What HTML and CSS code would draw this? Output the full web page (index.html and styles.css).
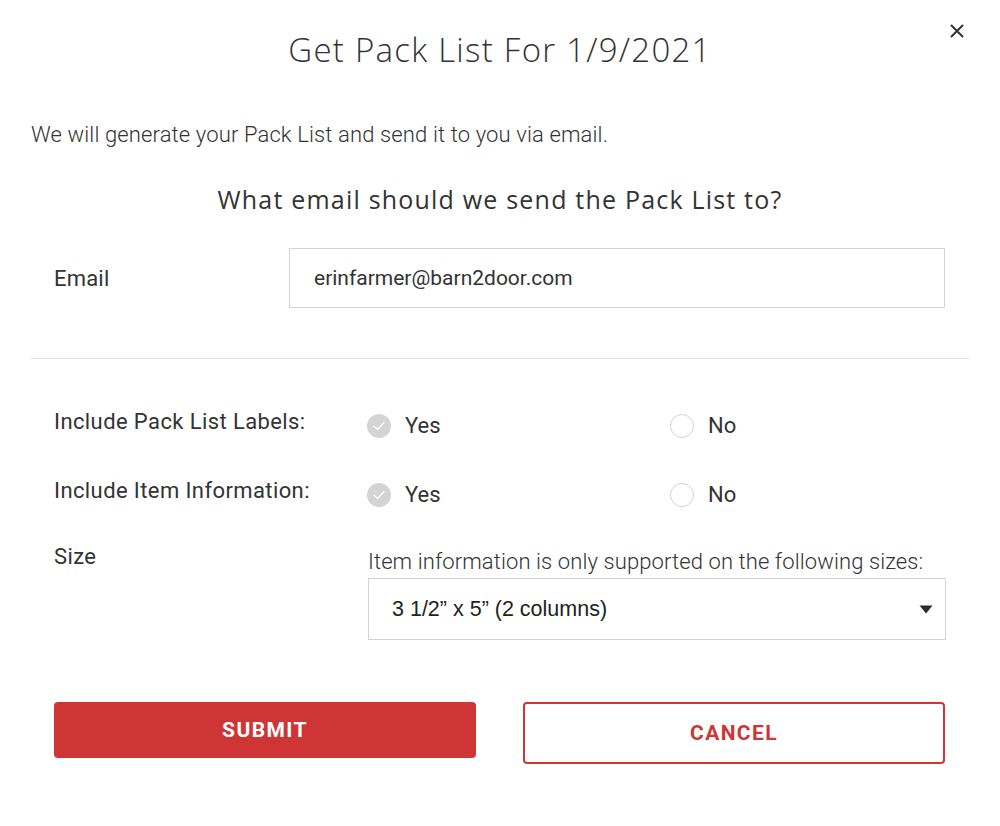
FILE: index.html
```html
<!DOCTYPE html>
<html lang="en">
<head>
<meta charset="utf-8">
<title>Get Pack List</title>
<link rel="stylesheet" href="styles.css">
</head>
<body>
<div class="modal">
  <button class="close" aria-label="Close">
    <svg width="14" height="14" viewBox="0 0 14 14"><path d="M1.5 1.5 L12.5 12.5 M12.5 1.5 L1.5 12.5" stroke="#333" stroke-width="2" stroke-linecap="round"/></svg>
  </button>
  <h1 class="title">Get Pack List For 1/9/2021</h1>
  <p class="intro">We will generate your Pack List and send it to you via email.</p>
  <h2 class="question">What email should we send the Pack List to?</h2>

  <div class="email-row">
    <label class="label email-label">Email</label>
    <div class="input">erinfarmer@barn2door.com</div>
  </div>

  <hr class="divider">

  <div class="opt-row">
    <div class="label opt-label">Include Pack List Labels:</div>
    <div class="option yes">
      <span class="radio checked"><svg width="24" height="24" viewBox="0 0 24 24"><circle cx="12" cy="12" r="12" fill="#d4d4d4"/><path d="M7 12.3 L10.5 15.6 L17 8.8" fill="none" stroke="#fff" stroke-width="1.4" stroke-linecap="round" stroke-linejoin="round"/></svg></span>
      <span class="opt-text">Yes</span>
    </div>
    <div class="option">
      <span class="radio"></span>
      <span class="opt-text">No</span>
    </div>
  </div>

  <div class="opt-row">
    <div class="label opt-label">Include Item Information:</div>
    <div class="option yes">
      <span class="radio checked"><svg width="24" height="24" viewBox="0 0 24 24"><circle cx="12" cy="12" r="12" fill="#d4d4d4"/><path d="M7 12.3 L10.5 15.6 L17 8.8" fill="none" stroke="#fff" stroke-width="1.4" stroke-linecap="round" stroke-linejoin="round"/></svg></span>
      <span class="opt-text">Yes</span>
    </div>
    <div class="option">
      <span class="radio"></span>
      <span class="opt-text">No</span>
    </div>
  </div>

  <div class="size-row">
    <div class="label size-label">Size</div>
    <div class="size-col">
      <div class="hint">Item information is only supported on the following sizes:</div>
      <div class="select">
        <span>3 1/2” x 5” (2 columns)</span>
        <svg class="caret" width="14" height="9" viewBox="0 0 14 9"><path d="M0.5 0.5 H13.5 L7 8.5 Z" fill="#2b2b2b"/></svg>
      </div>
    </div>
  </div>

  <div class="buttons">
    <button class="btn submit">SUBMIT</button>
    <button class="btn cancel">CANCEL</button>
  </div>
</div>
</body>
</html>
```

FILE: styles.css
```css
* { box-sizing: border-box; }
html, body { margin: 0; padding: 0; background: #fff; }
body {
  width: 1000px;
  height: 826px;
  font-family: Roboto, "Liberation Sans", sans-serif;
  color: #333;
}
.modal {
  position: relative;
  width: 1000px;
  height: 826px;
  padding: 0 31px;
}
.close {
  position: absolute;
  top: 24px;
  right: 36px;
  width: 14px;
  height: 14px;
  padding: 0;
  border: 0;
  background: none;
  display: flex;
}
.title {
  margin: 0;
  height: 100px;
  line-height: 100px;
  text-align: center;
  font-family: "Open Sans", sans-serif;
  font-weight: 300;
  font-size: 33px;
  color: #333;
  letter-spacing: 1.25px;
}
.intro {
  margin: 18px 0 0;
  height: 34px;
  line-height: 34px;
  font-size: 22px;
  font-weight: 300;
  color: #333;
  letter-spacing: 0.13px;
}
.question {
  margin: 30px 0 0;
  height: 34px;
  line-height: 34px;
  text-align: center;
  font-family: "Open Sans", sans-serif;
  font-weight: 400;
  font-size: 25px;
  color: #333;
  letter-spacing: 1.2px;
}
.email-row {
  margin-top: 32px;
  padding-left: 23px;
  display: flex;
  align-items: center;
  height: 60px;
}
.label {
  font-size: 22px;
  font-weight: 400;
  color: #333;
  line-height: 26px;
  letter-spacing: 0.4px;
}
.email-label { width: 235px; letter-spacing: 0.2px; padding-top: 2px; }
.input {
  width: 656px;
  height: 60px;
  border: 1px solid #d3d3d3;
  padding: 0 24px;
  display: flex;
  align-items: center;
  font-size: 21px;
  color: #333;
}
.divider {
  margin: 50px 0 0;
  border: 0;
  border-top: 1px solid #dcdcdc;
  height: 0;
}
.opt-row {
  display: flex;
  align-items: flex-start;
  padding-left: 23px;
  height: 69px;
}
.divider + .opt-row { margin-top: 48px; }
.opt-label { width: 313px; padding-top: 2px; }
.option {
  display: flex;
  align-items: center;
  gap: 14px;
  margin-top: 6px;
  height: 26px;
}
.option.yes { width: 303px; }
.radio {
  width: 24px;
  height: 24px;
  border-radius: 50%;
  border: 1.5px solid #d3d3d3;
  display: block;
  flex: none;
}
.radio.checked { border: 0; }
.radio svg { display: block; }
.opt-text { font-size: 22px; line-height: 26px; color: #333; }
.size-row {
  display: flex;
  align-items: flex-start;
  padding-left: 23px;
  margin-top: -3px;
}
.size-label { width: 314px; padding-top: 2px; }
.size-col { width: 578px; }
.hint {
  margin-top: 7px;
  font-size: 22px;
  font-weight: 300;
  line-height: 26px;
  color: #333;
  letter-spacing: 0.1px;
}
.select {
  margin-top: 3px;
  height: 62px;
  border: 1px solid #d3d3d3;
  display: flex;
  align-items: center;
  justify-content: space-between;
  padding: 0 12px 0 23px;
  font-family: "Liberation Sans", Arial, sans-serif;
  font-size: 21.5px;
  color: #222;
}
.buttons {
  margin-top: 62px;
  padding-left: 23px;
  display: flex;
  align-items: flex-start;
  gap: 47px;
}
.btn {
  width: 422px;
  font-family: Roboto, sans-serif;
  font-weight: 700;
  font-size: 21px;
  letter-spacing: 1.4px;
  border-radius: 4px;
  cursor: pointer;
}
.submit {
  height: 56px;
  background: #d03536;
  color: #fff;
  border: 0;
}
.cancel {
  height: 62px;
  background: #fff;
  color: #d03536;
  border: 2px solid #d03536;
}
```
